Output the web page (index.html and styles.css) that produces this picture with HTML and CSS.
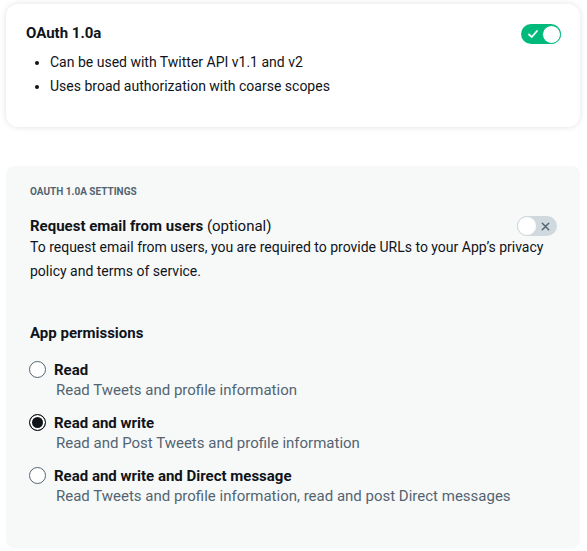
FILE: index.html
```html
<!DOCTYPE html>
<html>
<head>
<meta charset="utf-8">
<link rel="stylesheet" href="styles.css">
</head>
<body>
<div class="page">
  <section class="card">
    <div class="card-head">
      <h2 class="card-title">OAuth 1.0a</h2>
      <span class="toggle toggle-on">
        <svg class="check" viewBox="0 0 12 12" width="12" height="12"><path d="M2 6.5 L4.8 9 L10 3" fill="none" stroke="#fff" stroke-width="1.8" stroke-linecap="round" stroke-linejoin="round"/></svg>
        <span class="knob"></span>
      </span>
    </div>
    <ul class="bullets">
      <li>Can be used with Twitter API v1.1 and v2</li>
      <li>Uses broad authorization with coarse scopes</li>
    </ul>
  </section>

  <section class="settings">
    <div class="eyebrow">OAUTH 1.0A SETTINGS</div>
    <div class="email-row">
      <div class="email-title"><strong>Request email from users</strong> (optional)</div>
      <span class="toggle toggle-off">
        <span class="knob"></span>
        <svg class="cross" viewBox="0 0 12 12" width="11" height="11"><path d="M2.5 2.5 L9.5 9.5 M9.5 2.5 L2.5 9.5" fill="none" stroke="#536471" stroke-width="1.6" stroke-linecap="round"/></svg>
      </span>
    </div>
    <p class="desc">To request email from users, you are required to provide URLs to your App’s privacy policy and terms of service.</p>

    <h3 class="perm-title">App permissions</h3>
    <div class="options">
      <label class="option">
        <span class="radio"></span>
        <span class="opt-text">
          <span class="opt-label">Read</span>
          <span class="opt-sub">Read Tweets and profile information</span>
        </span>
      </label>
      <label class="option">
        <span class="radio radio-on"></span>
        <span class="opt-text">
          <span class="opt-label">Read and write</span>
          <span class="opt-sub">Read and Post Tweets and profile information</span>
        </span>
      </label>
      <label class="option">
        <span class="radio"></span>
        <span class="opt-text">
          <span class="opt-label">Read and write and Direct message</span>
          <span class="opt-sub">Read Tweets and profile information, read and post Direct messages</span>
        </span>
      </label>
    </div>
  </section>
</div>
</body>
</html>
```
FILE: styles.css
```css
* { box-sizing: border-box; }
html, body { margin: 0; padding: 0; background: #fff; }
body {
  font-family: Roboto, "Liberation Sans", sans-serif;
  color: #0f1419;
}
.page {
  padding: 4px 7px 0 6px;
  display: flex;
  flex-direction: column;
  gap: 39px;
}
.card {
  background: #fff;
  border-radius: 12px;
  box-shadow: 0 0 6px rgba(0,0,0,0.12);
  padding: 20px 20px 22px 20px;
  height: 123px;
}
.card-head {
  display: flex;
  justify-content: space-between;
  align-items: flex-start;
}
.card-title {
  margin: 0;
  font-size: 15px;
  font-weight: 700;
  line-height: 18px;
}
.toggle {
  position: relative;
  display: inline-flex;
  align-items: center;
  width: 40px;
  height: 20px;
  border-radius: 10px;
  flex-shrink: 0;
}
.toggle-on {
  background: #00ba7c;
  margin-right: -1px;
  padding: 0 1px 0 6px;
  justify-content: space-between;
}
.toggle-on .knob {
  width: 19px; height: 19px;
  border-radius: 50%;
  background: #fff;
  border: 1px solid #00ba7c;
  margin-right: -1px;
}
.toggle-off {
  background: #cfd9de;
  padding: 0 6px 0 0;
  justify-content: space-between;
  margin-right: -1px;
}
.toggle-off .knob {
  width: 20px; height: 20px;
  border-radius: 50%;
  background: #fff;
  border: 1px solid #cfd9de;
}
.bullets {
  margin: 6px 0 0 0;
  padding: 0 0 0 24px;
  font-size: 14px;
  line-height: 24px;
}
.settings {
  background: #f7f9f9;
  border-radius: 8px;
  padding: 19px 24px 0 24px;
  height: 382px;
}
.eyebrow {
  font-size: 10px;
  font-weight: 700;
  color: #536471;
  line-height: 13px;
}
.email-row {
  display: flex;
  justify-content: space-between;
  align-items: center;
  margin-top: 18px;
}
.email-title {
  font-size: 15px;
  line-height: 20px;
}
.email-title strong { font-weight: 700; }
.desc {
  margin: -1px 0 0 0;
  font-size: 14px;
  line-height: 24px;
}
.perm-title {
  margin: 40px 0 0 0;
  font-size: 15px;
  font-weight: 700;
  line-height: 20px;
}
.options {
  display: flex;
  flex-direction: column;
  gap: 13px;
  margin-top: 17px;
}
.option {
  display: flex;
  align-items: flex-start;
  gap: 8px;
}
.radio {
  width: 17px; height: 17px;
  border-radius: 50%;
  border: 1px solid #536471;
  background: #fff;
  margin-top: 1px;
  margin-left: -1px;
  flex-shrink: 0;
}
.radio-on {
  background: #0f1419;
  border: 1px solid #0f1419;
  box-shadow: inset 0 0 0 2px #fff;
}
.opt-text {
  display: flex;
  flex-direction: column;
}
.opt-label {
  font-size: 15px;
  font-weight: 700;
  line-height: 20px;
}
.opt-sub {
  font-size: 15px;
  color: #536471;
  line-height: 20px;
  padding-left: 2px;
}
```
